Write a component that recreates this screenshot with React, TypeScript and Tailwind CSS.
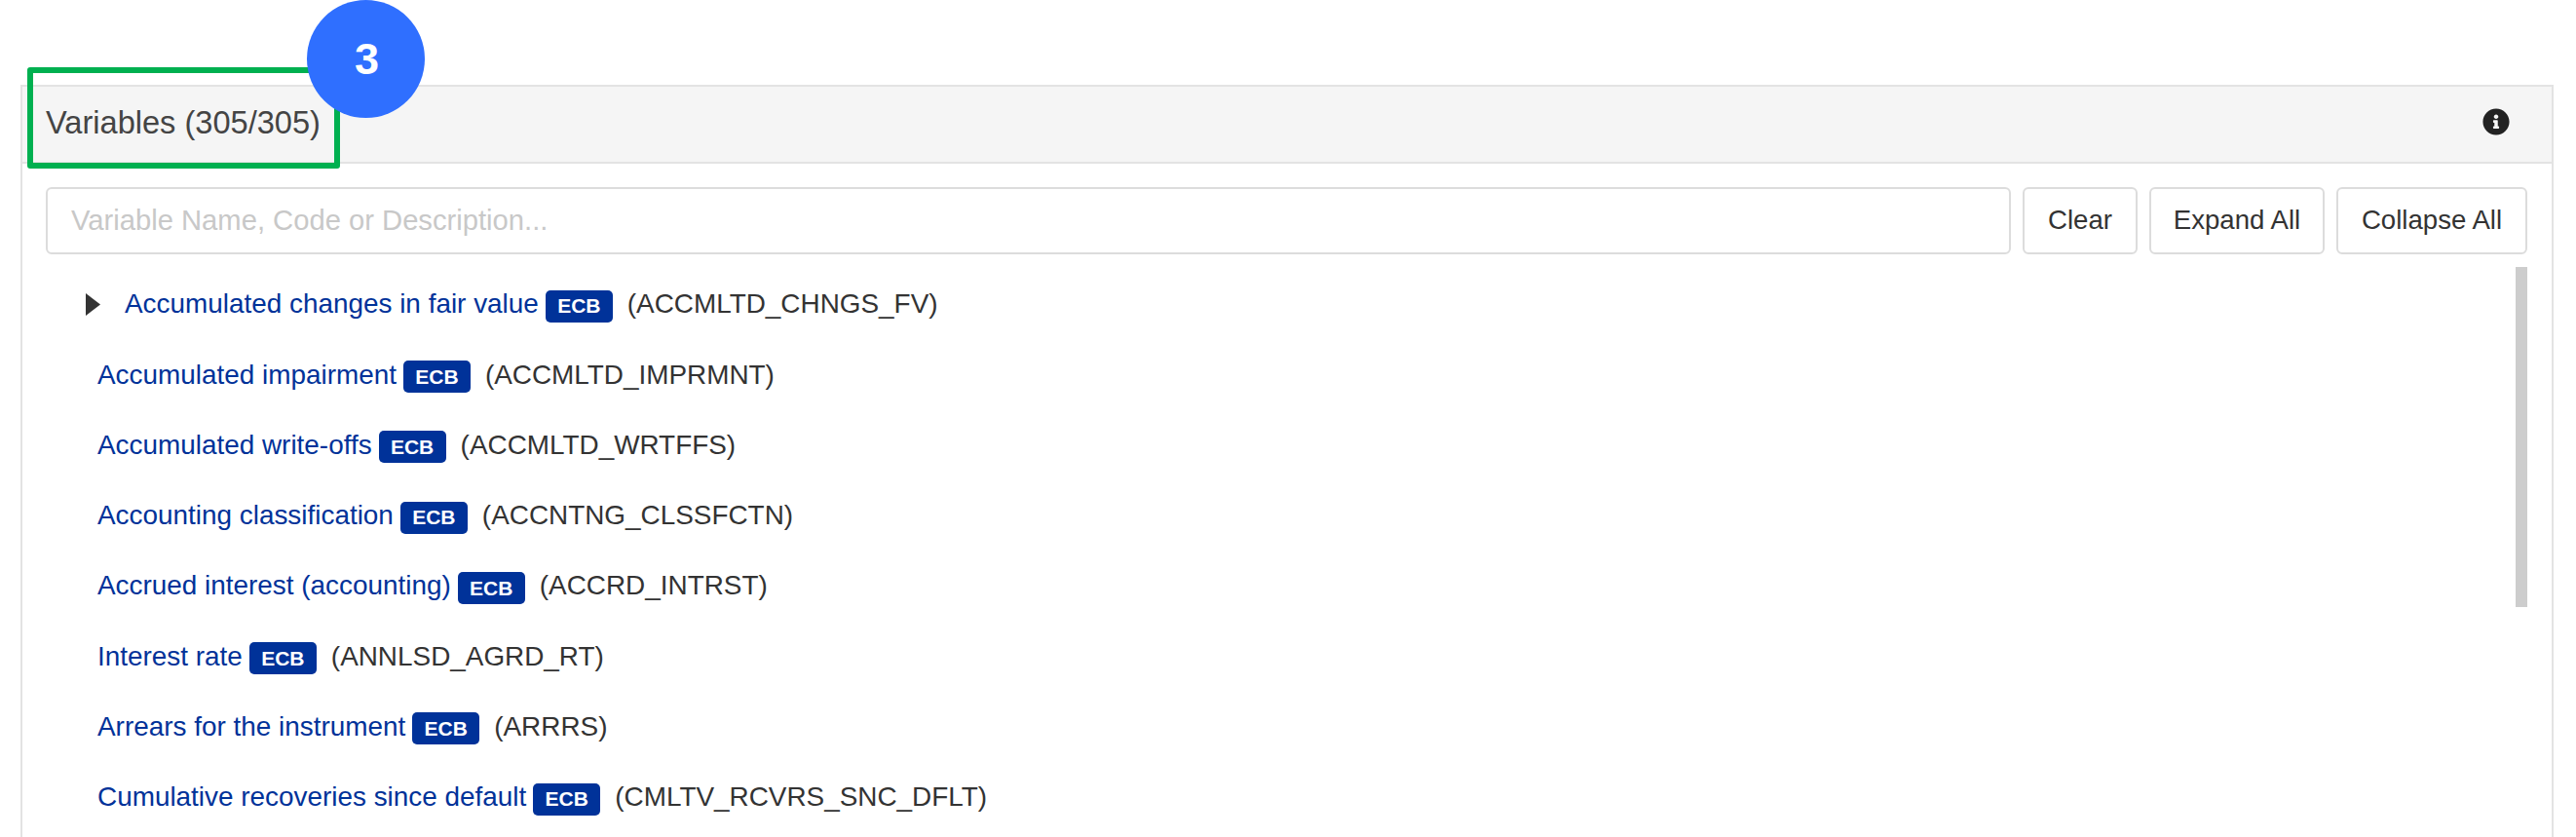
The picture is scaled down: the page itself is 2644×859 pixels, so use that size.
import { FaInfoCircle } from "react-icons/fa";

type Variable = {
    name: string;
    code: string;
    expandable?: boolean;
};

const variables: Variable[] = [
    { name: "Accumulated changes in fair value", code: "ACCMLTD_CHNGS_FV", expandable: true },
    { name: "Accumulated impairment", code: "ACCMLTD_IMPRMNT" },
    { name: "Accumulated write-offs", code: "ACCMLTD_WRTFFS" },
    { name: "Accounting classification", code: "ACCNTNG_CLSSFCTN" },
    { name: "Accrued interest (accounting)", code: "ACCRD_INTRST" },
    { name: "Interest rate", code: "ANNLSD_AGRD_RT" },
    { name: "Arrears for the instrument", code: "ARRRS" },
    { name: "Cumulative recoveries since default", code: "CMLTV_RCVRS_SNC_DFLT" },
];

function VariableRow({ name, code, expandable }: Variable) {
    return (
        <div className={`flex h-[72.3px] items-center ${expandable ? "pl-[65px]" : "pl-[77px]"}`}>
            {expandable && (
                <svg viewBox="0 0 15 23" className="mr-[25px] h-[23px] w-[15px] fill-[#333]">
                    <polygon points="0,0 15,11.5 0,23" />
                </svg>
            )}
            <span className="text-[27.9px] text-[#003299]">{name}</span>
            <span className="ml-[7px] mt-[4px] flex h-[33px] w-[69px] items-center justify-center rounded-[5px] bg-[#003299] text-[21px] font-bold text-white">
                ECB
            </span>
            <span className="ml-[15px] text-[27.9px]">({code})</span>
        </div>
    );
}

function ToolButton({ label, width }: { label: string; width: string }) {
    return (
        <button className={`flex h-[69px] items-center justify-center rounded-[6px] border-2 border-[#dcdcdc] bg-white pb-[2px] text-[27.6px] ${width}`}>
            {label}
        </button>
    );
}

export default function App() {
    return (
        <div className="relative h-[859px] w-[2644px] overflow-hidden bg-white pl-[21px] pt-[87px] font-['Liberation_Sans',sans-serif] text-[28px] text-[#333]">
            <div className="h-[772px] w-[2600px] border-x-2 border-t-2 border-[#e3e3e3]">
                <div className="flex h-[79px] items-center justify-between border-b-2 border-[#e3e3e3] bg-[#f5f5f5] pb-[2px] pl-[24px] pr-[43px]">
                    <span className="text-[32.6px] text-[#444]">Variables (305/305)</span>
                    <FaInfoCircle className="mb-[3px] h-[28px] w-[28px] text-[#222]" />
                </div>
                <div className="flex gap-[12px] pl-[24px] pr-[25px] pt-[24px]">
                    <div className="flex h-[69px] flex-1 items-center rounded-[6px] border-2 border-[#dcdcdc] pl-[24px] text-[29.2px] text-[#c8c8c8]">
                        Variable Name, Code or Description...
                    </div>
                    <ToolButton label="Clear" width="w-[118px]" />
                    <ToolButton label="Expand All" width="w-[180px]" />
                    <ToolButton label="Collapse All" width="w-[196px]" />
                </div>
                <div className="flex justify-between pr-[25px] pt-[15px]">
                    <div className="flex-1">
                        {variables.map((v) => (
                            <VariableRow key={v.code} {...v} />
                        ))}
                    </div>
                    <div className="-mt-[2px] h-[349px] w-[12px] bg-[#cdcdcd]" />
                </div>
            </div>

            {/* callout over the panel header */}
            <div className="absolute left-[28px] top-[69px] h-[104px] w-[321px] rounded-[3px] border-[6px] border-[#00b050]" />
            <div className="absolute left-[315px] top-0 flex h-[121px] w-[121px] items-center justify-center rounded-full bg-[#2f6fff] pl-[2px] text-[45px] font-bold text-white">
                3
            </div>
        </div>
    );
}
